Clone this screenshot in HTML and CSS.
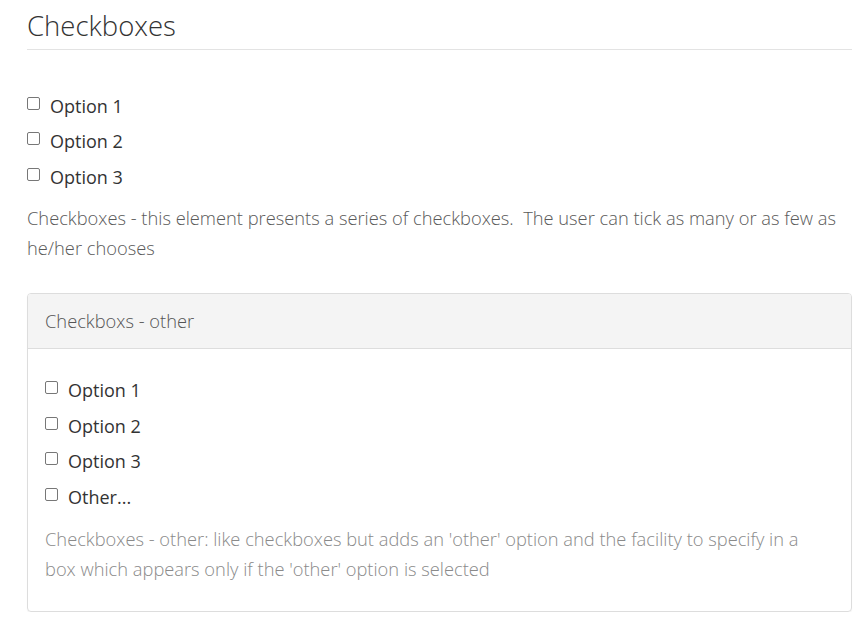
FILE: index.html
```html
<!DOCTYPE html>
<html lang="en">
<head>
    <meta charset="UTF-8">
    <meta name="viewport" content="width=device-width, initial-scale=1.0">
    <title>Checkboxes</title>
    <link rel="stylesheet" href="styles.css">
</head>
<body>
    <div class="container">
        <h1>Checkboxes</h1>

        <div class="options">
            <label class="option"><input type="checkbox" name="cb1"> Option 1</label>
            <label class="option"><input type="checkbox" name="cb1"> Option 2</label>
            <label class="option"><input type="checkbox" name="cb1"> Option 3</label>
        </div>
        <p class="help">Checkboxes - this element presents a series of checkboxes.&nbsp; The user can tick as many or as few as he/her chooses</p>

        <div class="panel">
            <div class="panel-heading">Checkboxs - other</div>
            <div class="panel-body">
                <div class="options">
                    <label class="option"><input type="checkbox" name="cb2"> Option 1</label>
                    <label class="option"><input type="checkbox" name="cb2"> Option 2</label>
                    <label class="option"><input type="checkbox" name="cb2"> Option 3</label>
                    <label class="option"><input type="checkbox" name="cb2"> Other...</label>
                </div>
                <p class="help muted">Checkboxes - other: like checkboxes but adds an 'other' option and the facility to specify in a box which appears only if the 'other' option is selected</p>
            </div>
        </div>
    </div>
</body>
</html>
```

FILE: styles.css
```css
body {
    margin: 0;
    font-family: "Open Sans", Arial, sans-serif;
    color: #333;
    background: #fff;
}
.container {
    width: 825px;
    margin-left: 27px;
}
h1 {
    margin: 6px 0 0;
    font-size: 27.5px;
    font-weight: 300;
    line-height: 40px;
    padding-bottom: 3px;
    border-bottom: 1px solid #e3e3e3;
    color: #333;
}
.options {
    margin-top: 38px;
}
.option {
    display: flex;
    align-items: center;
    height: 35.5px;
    font-size: 18px;
    color: #333;
}
.option input {
    appearance: none;
    -webkit-appearance: none;
    width: 13px;
    height: 13px;
    margin: 0 10px 5px 0;
    border: 1px solid #777;
    border-radius: 2px;
    background: #fff;
    flex-shrink: 0;
}
.help {
    margin: 8px 0 0;
    font-size: 18.3px;
    font-weight: 300;
    line-height: 30px;
    color: #5a5a5a;
}
.panel {
    margin-top: 30px;
    border: 1px solid #ddd;
    border-radius: 4px;
    box-shadow: 0 1px 1px rgba(0, 0, 0, 0.05);
}
.panel-heading {
    height: 54px;
    line-height: 54px;
    padding-left: 17px;
    background-color: #f4f4f4;
    border-bottom: 1px solid #ddd;
    border-radius: 3px 3px 0 0;
    font-size: 18.3px;
    font-weight: 300;
    color: #555;
}
.panel-body {
    padding: 24px 20px 27px 17px;
}
.panel-body .options {
    margin-top: 0;
}
.help.muted {
    margin-top: 9px;
    color: #8a8a8a;
}
```
